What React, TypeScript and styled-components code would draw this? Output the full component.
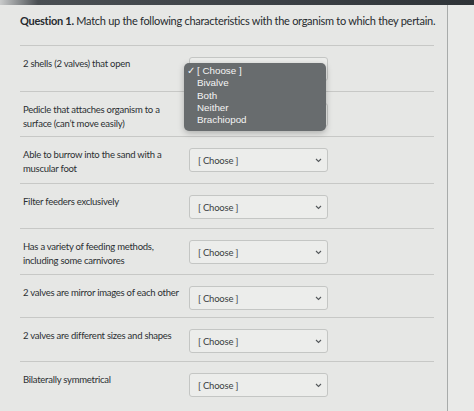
import styled, { createGlobalStyle } from 'styled-components';

const GlobalStyle = createGlobalStyle`
  body {
    margin: 0;
    background: #e6e7e5;
    font-family: Lato, "Open Sans", sans-serif;
  }
`;

const TopBar = styled.div`
  height: 5px;
  background: linear-gradient(90deg, #c9cbcb 0%, #4a4f53 8%, #3b4045 60%, #2f3438 100%);
`;

const Page = styled.div`
  display: flex;
  width: 474px;
  height: 406px;
  overflow: hidden;
`;

const Panel = styled.div`
  width: 448px;
  border-right: 1px solid #a8abaa;
  padding: 0 13px 0 20px;
  box-sizing: border-box;
`;

const Side = styled.div`
  flex: 1;
  background: #e9eae8;
`;

const Title = styled.h2`
  margin: 0;
  height: 40px;
  box-sizing: border-box;
  padding-top: 9px;
  font-size: 11px;
  letter-spacing: -0.28px;
  font-weight: 400;
  color: #262b2f;
  white-space: nowrap;

  b {
    font-weight: 700;
  }
`;

const Row = styled.div<{ $h: number }>`
  position: relative;
  display: grid;
  grid-template-columns: 160px 139px;
  column-gap: 6px;
  align-items: start;
  height: ${(p) => p.$h}px;
  box-sizing: border-box;
  border-top: 1px solid #c7c8c6;
  padding: 11px 0 0 3px;
`;

const Label = styled.div`
  font-size: 9.5px;
  letter-spacing: -0.25px;
  line-height: 14px;
  color: #2b2f32;
  margin-top: 0;
`;

const Select = styled.div`
  position: relative;
  display: flex;
  align-items: center;
  justify-content: space-between;
  height: 24px;
  box-sizing: border-box;
  border: 1px solid #c4c6c4;
  border-radius: 3px;
  background: #ecedeb;
  padding: 0 5px 0 8px;
  font-size: 9.5px;
  letter-spacing: -0.2px;
  color: #3b3f42;
`;

const SelectText = styled.span<{ $covered: boolean }>`
  visibility: ${(p) => (p.$covered ? 'hidden' : 'visible')};
`;

const Menu = styled.div`
  position: absolute;
  left: -6px;
  top: 5px;
  width: 142px;
  height: 68px;
  box-sizing: border-box;
  padding: 2px 0;
  border-radius: 5px;
  background: #686c6e;
  box-shadow: 0 2px 6px rgba(0, 0, 0, 0.25);
  font-family: "Liberation Sans", Arial, sans-serif;
  font-size: 9.8px;
  letter-spacing: 0;
  color: #f4f4f4;
  z-index: 2;
`;

const MenuItem = styled.div`
  position: relative;
  height: 12.3px;
  line-height: 12.3px;
  padding-left: 13px;
`;

const Check = styled.span`
  position: absolute;
  left: 3px;
  top: 0;
`;

const Chevron = () => (
  <svg width="7" height="5" viewBox="0 0 7 5">
    <path d="M1 1l2.5 2.5L6 1" fill="none" stroke="#55595c" strokeWidth="1.1" />
  </svg>
);

const rows: { label: string; h: number }[] = [
  { label: '2 shells (2 valves) that open', h: 46 },
  { label: 'Pedicle that attaches organism to a surface (can\u2019t move easily)', h: 45 },
  { label: 'Able to burrow into the sand with a muscular foot', h: 47 },
  { label: 'Filter feeders exclusively', h: 45 },
  { label: 'Has a variety of feeding methods, including some carnivores', h: 46 },
  { label: '2 valves are mirror images of each other', h: 43 },
  { label: '2 valves are different sizes and shapes', h: 44 },
  { label: 'Bilaterally symmetrical', h: 45 },
];

const options = ['Bivalve', 'Both', 'Neither', 'Brachiopod'];

export default function App() {
  return (
    <>
      <GlobalStyle />
      <TopBar />
      <Page>
        <Panel>
          <Title>
            <b>Question 1.</b> Match up the following characteristics with the organism to which they pertain.
          </Title>
          {rows.map((r, i) => (
            <Row key={i} $h={r.h}>
              <Label>{r.label}</Label>
              <Select>
                <SelectText $covered={i < 2}>[ Choose ]</SelectText>
                <Chevron />
                {i === 0 && (
                  <Menu>
                    <MenuItem>
                      <Check>✓</Check>[ Choose ]
                    </MenuItem>
                    {options.map((o) => (
                      <MenuItem key={o}>{o}</MenuItem>
                    ))}
                  </Menu>
                )}
              </Select>
            </Row>
          ))}
        </Panel>
        <Side />
      </Page>
    </>
  );
}
